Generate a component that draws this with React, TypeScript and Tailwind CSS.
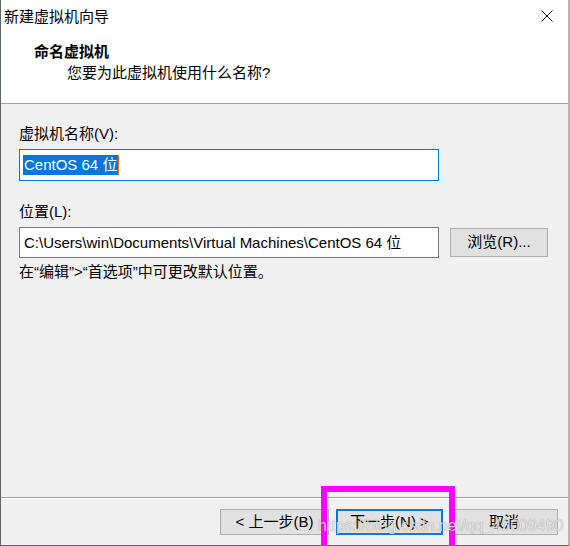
export default function App() {
  const font = "font-['Liberation_Sans','Noto_Sans_CJK_SC',sans-serif]";
  return (
    <div className={`relative w-[570px] h-[546px] overflow-hidden bg-[#f0f0f0] text-black ${font}`}>
      <div className="flex h-full flex-col border-l border-b border-[#5b6770] border-r-[2px] border-r-[#b4b4b4]">
        {/* Title + header */}
        <div className="h-[104px] shrink-0 bg-white border-b border-[#a0a0a0]">
          <div className="flex h-[32px] items-center justify-between pl-[3px] pr-[15px]">
            <span className="text-[15px] leading-none">新建虚拟机向导</span>
            <svg width="12" height="12" viewBox="0 0 12 12" className="mb-[1px]">
              <path d="M0.5 0.5 L11.5 11.5 M11.5 0.5 L0.5 11.5" stroke="#111" strokeWidth="1" />
            </svg>
          </div>
          <div className="pl-[33px] pt-[8px] text-[15px] font-bold leading-[22px] font-['Noto_Sans_CJK_SC',sans-serif]">
            命名虚拟机
          </div>
          <div className="pl-[66px] text-[15px] leading-[22px]">您要为此虚拟机使用什么名称?</div>
        </div>

        {/* Body */}
        <div className="flex-1 px-[18px] pt-[20px] text-[15px]">
          <div className="leading-[20px]">虚拟机名称(V):</div>
          <div className="mt-[5px] flex h-[32px] w-[420px] items-center border border-[#0078d7] bg-white pl-[3px]">
            <span className="relative bg-[#0078d7] px-[1px] leading-[20px] text-white">
              CentOS 64 位
              <span className="absolute right-[-1px] top-0 h-[20px] w-[1px] bg-[#f07818]" />
            </span>
          </div>
          <div className="mt-[21px] leading-[20px]">位置(L):</div>
          <div className="mt-[5px] flex items-center gap-[11px]">
            <div className="flex h-[31px] w-[420px] items-center border border-[#7a7a7a] bg-white pl-[4px] leading-[20px]">
              C:\Users\win\Documents\Virtual Machines\CentOS 64 位
            </div>
            <button className="flex h-[29px] w-[98px] items-center justify-center border border-[#adadad] bg-[#e1e1e1]">
              浏览(R)...
            </button>
          </div>
          <div className="mt-[4px] leading-[20px]">在“编辑”&gt;“首选项”中可更改默认位置。</div>
        </div>

        {/* Footer */}
        <div className="h-[48px] shrink-0 border-t border-[#a0a0a0]">
          <div className="h-[1px] bg-white" />
          <div className="flex pl-[219px] pt-[10px] text-[15px]">
            <button className="flex h-[26px] w-[109px] items-center justify-center border border-[#adadad] bg-[#e1e1e1]">
              &lt; 上一步(B)
            </button>
            <button className="ml-[7px] flex h-[26px] w-[107px] items-center justify-center border-2 border-[#0078d7] bg-[#e1e1e1]">
              下一步(N) &gt;
            </button>
            <button className="ml-[7px] flex h-[26px] w-[108px] items-center justify-center border border-[#adadad] bg-[#e1e1e1]">
              取消
            </button>
          </div>
        </div>
      </div>

      {/* Annotation frame */}
      <div className="absolute left-[321px] top-[486px] h-[70px] w-[134px] border-[6px] border-[#ff00ff]" />

      {/* Watermark */}
      <div className="absolute left-[318px] top-[516px] text-[16px] leading-[20px] font-['Liberation_Sans',Arial,sans-serif] text-[rgba(255,255,255,0.75)] [text-shadow:0_0_1px_rgba(0,0,0,0.45)]">
        https://blog.csdn.net/qq_45009490
      </div>
    </div>
  );
}
